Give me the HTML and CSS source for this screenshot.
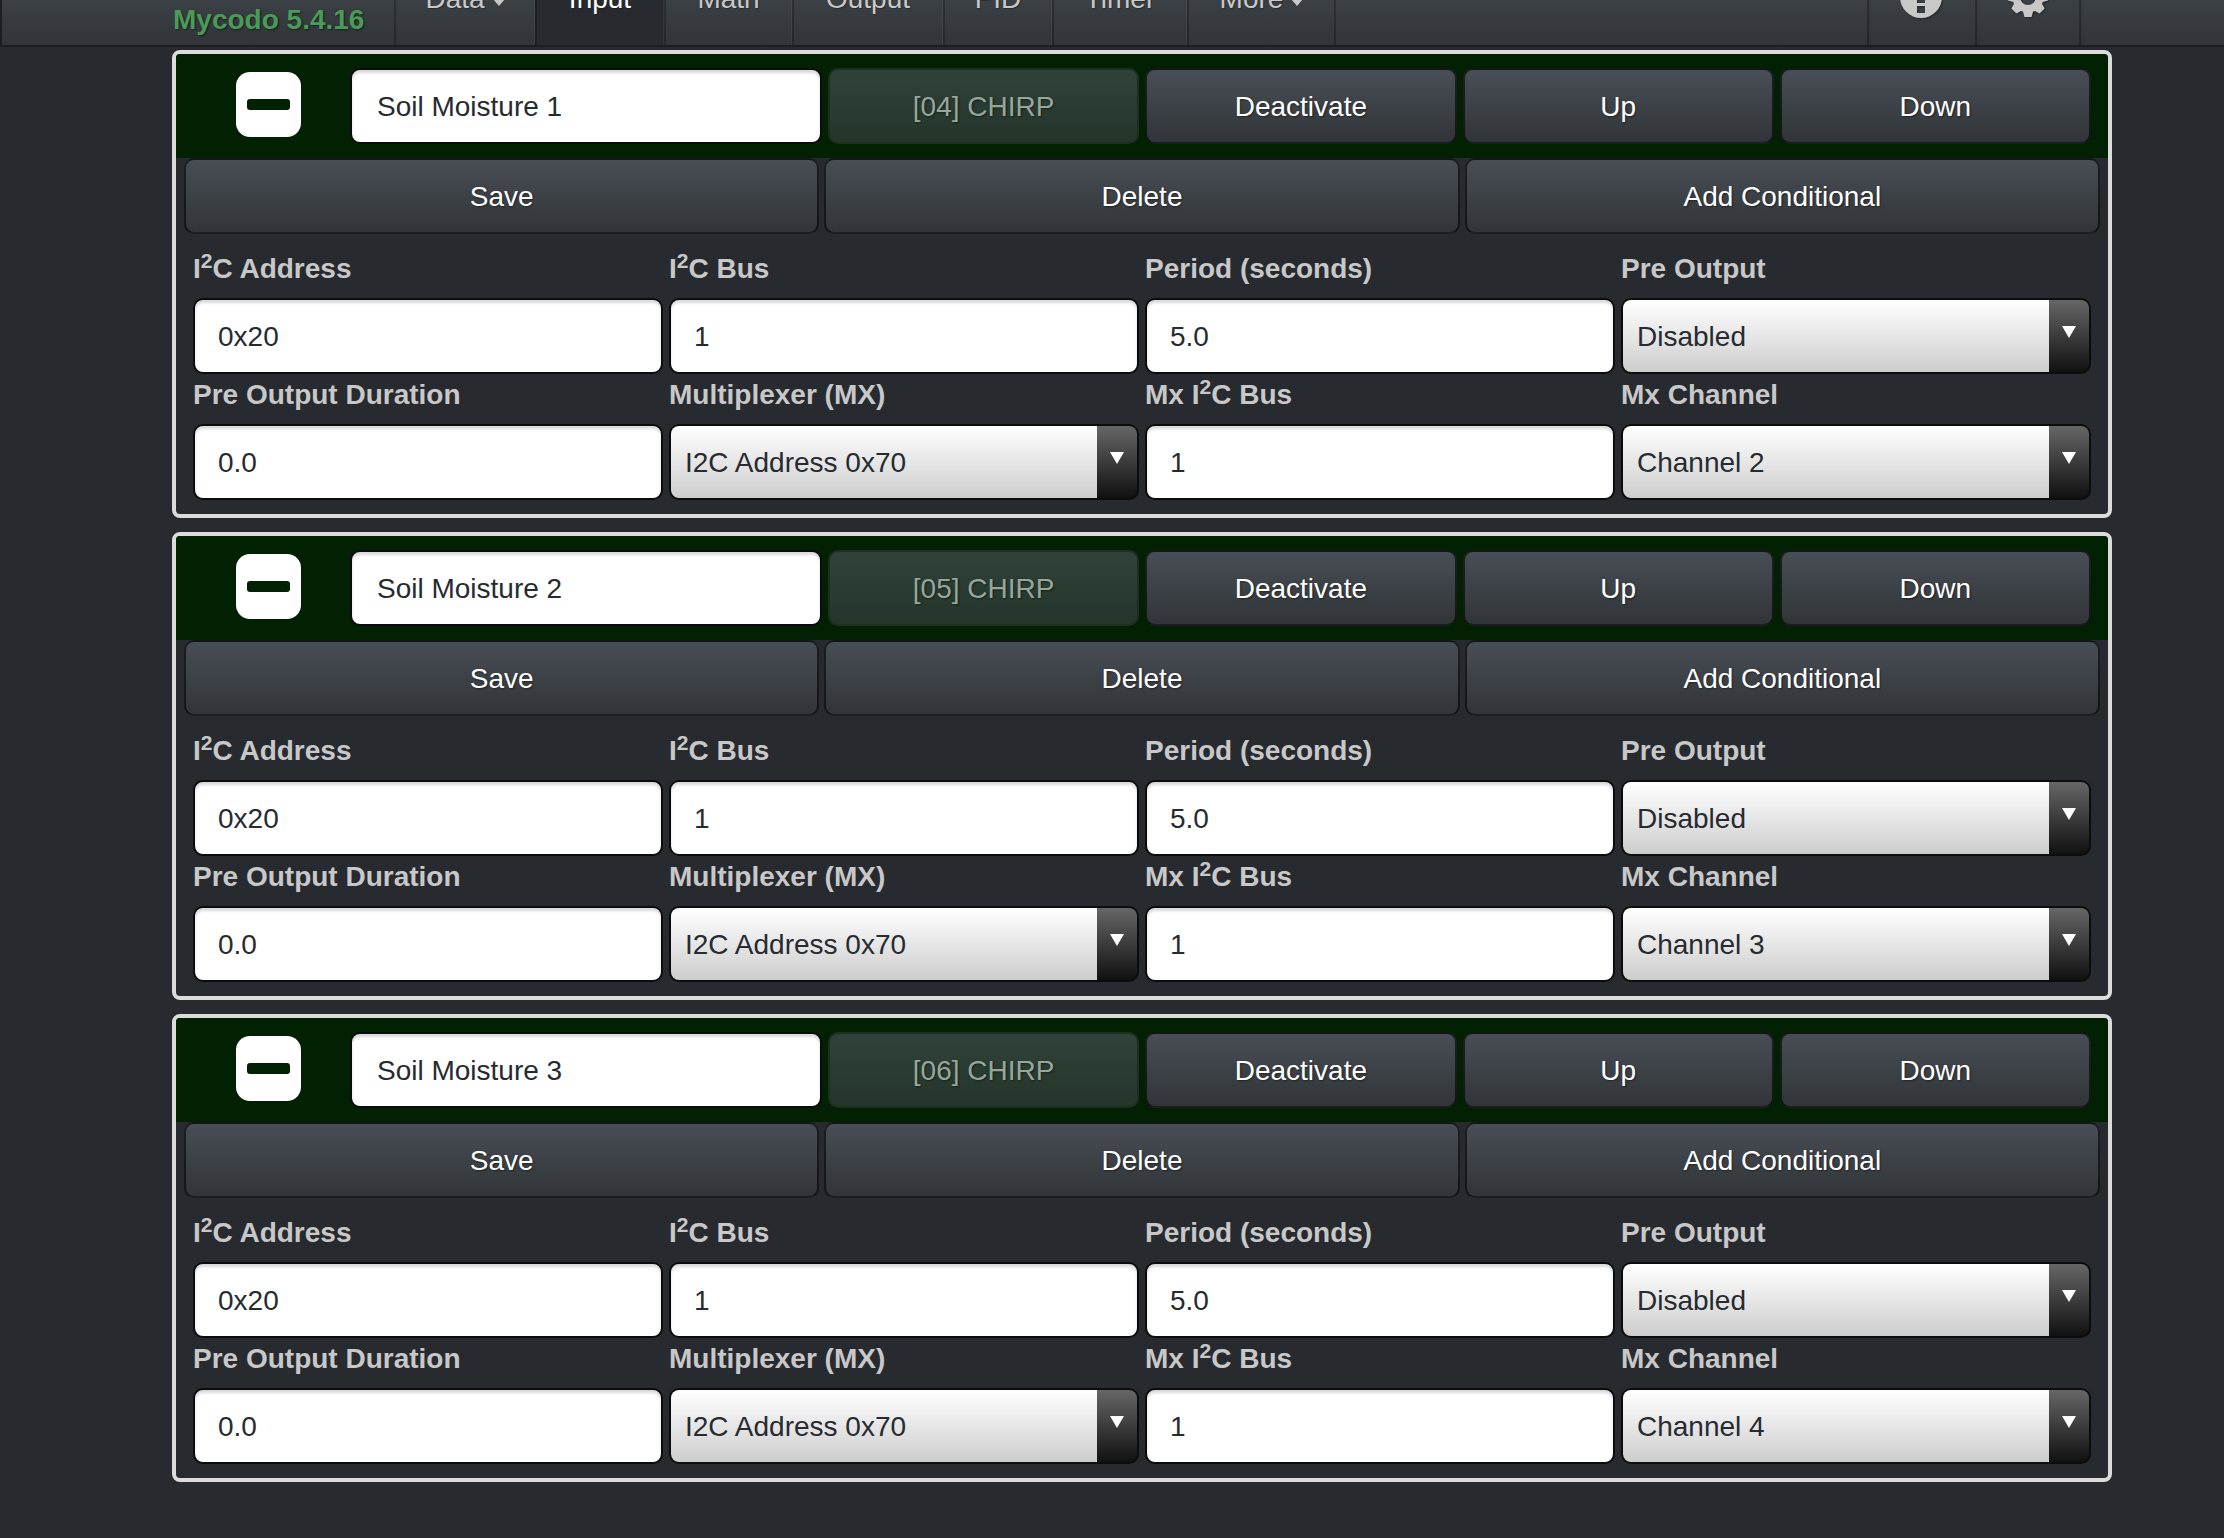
FILE: index.html
```html
<!DOCTYPE html>
<html lang="en">
<head>
<meta charset="utf-8">
<title>Mycodo Input</title>
<link rel="stylesheet" href="styles.css">
</head>
<body>
<nav class="navbar">
  <a class="brand">Mycodo 5.4.16</a>
  <ul class="nav-list">
    <li class="nav-item item-data">Data<span class="caret"></span></li>
    <li class="nav-item item-input active">Input</li>
    <li class="nav-item item-math">Math</li>
    <li class="nav-item item-output">Output</li>
    <li class="nav-item item-pid">PID</li>
    <li class="nav-item item-timer">Timer</li>
    <li class="nav-item item-more">More<span class="caret"></span></li>
  </ul>
  <ul class="nav-right">
    <li class="nav-icon icon-info">
      <svg width="44" height="44" viewBox="0 0 44 44"><path fill="#c8c8c8" fill-rule="evenodd" d="M22 1a21 21 0 1 0 0 42a21 21 0 1 0 0-42zM18 20h8v8h-8zM18 31h8v7h-8z"/></svg>
    </li>
    <li class="nav-icon icon-gear">
      <svg width="44" height="44" viewBox="0 0 44 44"><path fill="#c8c8c8" fill-rule="evenodd" d="M18.5 2H25.5L27 7.5L29.1 7.9L33.6 5.4L38.6 10.4L36.1 14.9L36.5 17L42 18.5V25.5L36.5 27L36.1 29.1L38.6 33.6L33.6 38.6L29.1 36.1L27 36.5L25.5 42H18.5L17 36.5L14.9 36.1L10.4 38.6L5.4 33.6L7.9 29.1L7.5 27L2 25.5V18.5L7.5 17L7.9 14.9L5.4 10.4L10.4 5.4L14.9 7.9L17 7.5ZM22 14a8 8 0 1 0 0 16a8 8 0 1 0 0-16z"/></svg>
    </li>
  </ul>
</nav>

<main class="list">

  <section class="panel">
    <div class="head">
      <button class="toggle"><span class="minus"></span></button>
      <input class="field name" value="Soil Moisture 1">
      <button class="btn disabled">[04] CHIRP</button>
      <button class="btn">Deactivate</button>
      <button class="btn">Up</button>
      <button class="btn">Down</button>
    </div>
    <div class="actions">
      <button class="btn">Save</button>
      <button class="btn">Delete</button>
      <button class="btn">Add Conditional</button>
    </div>
    <div class="grid">
      <div class="cell"><label>I<sup>2</sup>C Address</label><input class="field" value="0x20"></div>
      <div class="cell"><label>I<sup>2</sup>C Bus</label><input class="field" value="1"></div>
      <div class="cell"><label>Period (seconds)</label><input class="field" value="5.0"></div>
      <div class="cell"><label>Pre Output</label><div class="select"><span class="select-text">Disabled</span><span class="select-arrow"></span></div></div>
      <div class="cell"><label>Pre Output Duration</label><input class="field" value="0.0"></div>
      <div class="cell"><label>Multiplexer (MX)</label><div class="select"><span class="select-text">I2C Address 0x70</span><span class="select-arrow"></span></div></div>
      <div class="cell"><label>Mx I<sup>2</sup>C Bus</label><input class="field" value="1"></div>
      <div class="cell"><label>Mx Channel</label><div class="select"><span class="select-text">Channel 2</span><span class="select-arrow"></span></div></div>
    </div>
  </section>

  <section class="panel">
    <div class="head">
      <button class="toggle"><span class="minus"></span></button>
      <input class="field name" value="Soil Moisture 2">
      <button class="btn disabled">[05] CHIRP</button>
      <button class="btn">Deactivate</button>
      <button class="btn">Up</button>
      <button class="btn">Down</button>
    </div>
    <div class="actions">
      <button class="btn">Save</button>
      <button class="btn">Delete</button>
      <button class="btn">Add Conditional</button>
    </div>
    <div class="grid">
      <div class="cell"><label>I<sup>2</sup>C Address</label><input class="field" value="0x20"></div>
      <div class="cell"><label>I<sup>2</sup>C Bus</label><input class="field" value="1"></div>
      <div class="cell"><label>Period (seconds)</label><input class="field" value="5.0"></div>
      <div class="cell"><label>Pre Output</label><div class="select"><span class="select-text">Disabled</span><span class="select-arrow"></span></div></div>
      <div class="cell"><label>Pre Output Duration</label><input class="field" value="0.0"></div>
      <div class="cell"><label>Multiplexer (MX)</label><div class="select"><span class="select-text">I2C Address 0x70</span><span class="select-arrow"></span></div></div>
      <div class="cell"><label>Mx I<sup>2</sup>C Bus</label><input class="field" value="1"></div>
      <div class="cell"><label>Mx Channel</label><div class="select"><span class="select-text">Channel 3</span><span class="select-arrow"></span></div></div>
    </div>
  </section>

  <section class="panel">
    <div class="head">
      <button class="toggle"><span class="minus"></span></button>
      <input class="field name" value="Soil Moisture 3">
      <button class="btn disabled">[06] CHIRP</button>
      <button class="btn">Deactivate</button>
      <button class="btn">Up</button>
      <button class="btn">Down</button>
    </div>
    <div class="actions">
      <button class="btn">Save</button>
      <button class="btn">Delete</button>
      <button class="btn">Add Conditional</button>
    </div>
    <div class="grid">
      <div class="cell"><label>I<sup>2</sup>C Address</label><input class="field" value="0x20"></div>
      <div class="cell"><label>I<sup>2</sup>C Bus</label><input class="field" value="1"></div>
      <div class="cell"><label>Period (seconds)</label><input class="field" value="5.0"></div>
      <div class="cell"><label>Pre Output</label><div class="select"><span class="select-text">Disabled</span><span class="select-arrow"></span></div></div>
      <div class="cell"><label>Pre Output Duration</label><input class="field" value="0.0"></div>
      <div class="cell"><label>Multiplexer (MX)</label><div class="select"><span class="select-text">I2C Address 0x70</span><span class="select-arrow"></span></div></div>
      <div class="cell"><label>Mx I<sup>2</sup>C Bus</label><input class="field" value="1"></div>
      <div class="cell"><label>Mx Channel</label><div class="select"><span class="select-text">Channel 4</span><span class="select-arrow"></span></div></div>
    </div>
  </section>

</main>
</body>
</html>
```
FILE: styles.css
```css
* { box-sizing: border-box; }
html, body { height: 100%; }
body {
  margin: 0;
  height: 1538px;
  overflow: hidden;
  background: #272b30;
  font-family: "Liberation Sans", Arial, sans-serif;
  font-size: 28px;
  color: #c8c8c8;
}

.navbar {
  display: flex;
  height: 101px;
  margin-top: -54px;
  padding-left: 2px;
  background: linear-gradient(#484e55, #3a3f44 60%, #313539);
  border-bottom: 2px solid #1c1e22;
  border-left: 2px solid #1c1e22;
}
.brand {
  flex: none;
  width: 390px;
  padding: 54px 0 0 169px;
  font-weight: 700;
  line-height: 40px;
  color: #4a9a58;
  text-shadow: 1px 1px 2px rgba(0,0,0,.5);
  white-space: nowrap;
}
.nav-list, .nav-right {
  display: flex;
  margin: 0;
  padding: 0;
  list-style: none;
}
.nav-list { flex: 1; }
.nav-right { margin-right: 143px; }
.nav-item {
  display: flex;
  justify-content: center;
  align-items: center;
  padding-top: 7px;
  border-left: 2px solid rgba(0,0,0,.25);
  border-right: 1px solid rgba(255,255,255,.05);
  color: #c8c8c8;
  line-height: 40px;
  text-shadow: 1px 1px 1px rgba(0,0,0,.3);
}
.nav-list .nav-item:last-child { border-right: 2px solid rgba(0,0,0,.25); }
.item-data { width: 141px; }
.item-input { width: 129px; }
.item-math { width: 128px; }
.item-output { width: 151px; }
.item-pid { width: 109px; }
.item-timer { width: 135px; }
.item-more { width: 149px; }
.active {
  color: #fff;
  background: #272b30;
}
.caret {
  display: inline-block;
  margin: 6px 0 0 8px;
  border-top: 7px solid #c8c8c8;
  border-left: 6px solid transparent;
  border-right: 6px solid transparent;
}
.nav-icon {
  display: flex;
  align-items: flex-end;
  justify-content: center;
  padding-bottom: 26px;
  border-left: 2px solid rgba(0,0,0,.25);
  filter: drop-shadow(1px 1px 1px rgba(0,0,0,.35));
}
.icon-info { width: 108px; padding-right: 3px; }
.icon-gear { width: 106px; border-right: 2px solid rgba(0,0,0,.25); }

/* panels */
.list {
  display: flex;
  flex-direction: column;
  gap: 14px;
  width: 1940px;
  margin: 3px 0 0 172px;
}
.panel {
  height: 468px;
  border: 4px solid #dcdcdc;
  border-radius: 8px;
  background: #272b30;
}
.head {
  display: flex;
  gap: 6px;
  height: 104px;
  padding: 14px 17px 14px 60px;
  background: #022002;
  border-radius: 4px 4px 0 0;
}
.toggle {
  flex: none;
  width: 65px;
  height: 65px;
  margin: 4px 43px 0 0;
  padding: 0;
  display: flex;
  align-items: center;
  justify-content: center;
  background: #fff;
  border: 0;
  border-radius: 14px;
}
.minus {
  width: 43px;
  height: 11px;
  border-radius: 3px;
  background: #022002;
}
.field {
  display: block;
  width: 100%;
  height: 76px;
  padding: 2px 22px 0 23px;
  background: #fff;
  border: 2px solid #0b0c0d;
  border-radius: 10px;
  box-shadow: inset 0 3px 3px rgba(0,0,0,.15);
  font: 28px "Liberation Sans", Arial, sans-serif;
  color: #272b30;
  outline: 0;
}
.name { flex: none; width: 472px; padding-left: 25px; }
.btn {
  flex: 1 1 0;
  min-width: 0;
  height: 76px;
  padding: 2px 0 0;
  background: linear-gradient(#484e55, #3a3f44 60%, #313539);
  border: 2px solid rgba(0,0,0,.6);
  border-radius: 10px;
  font: 28px "Liberation Sans", Arial, sans-serif;
  color: #fff;
  text-shadow: 1px 1px 2px rgba(0,0,0,.45);
}
.disabled {
  background: linear-gradient(#30423a, #25352a);
  border-color: #1c2f20;
  color: #96a79b;
}
.actions {
  display: flex;
  gap: 5px;
  padding: 0 8px 0 8px;
}
.grid {
  display: grid;
  grid-template-columns: repeat(4, 470px);
  column-gap: 6px;
  padding: 14px 0 0 17px;
}
.cell label {
  display: block;
  height: 40px;
  margin-bottom: 10px;
  font-weight: 700;
  line-height: 41px;
  color: #c8c8c8;
  white-space: nowrap;
}
sup {
  font-size: 75%;
  line-height: 0;
  position: relative;
  top: -.5em;
  vertical-align: baseline;
}
.select {
  display: flex;
  height: 76px;
  background: #0b0c0d;
  border: 2px solid #0b0c0d;
  border-radius: 10px;
  overflow: hidden;
}
.select-text {
  flex: 1;
  padding-left: 14px;
  background: linear-gradient(#fff, #cdcdcd);
  line-height: 74px;
  color: #272b30;
}
.select-arrow {
  flex: none;
  width: 40px;
  display: flex;
  justify-content: center;
  padding-top: 26px;
  background: linear-gradient(#666, #111);
}
.select-arrow::before {
  content: "";
  width: 0;
  height: 0;
  border-top: 12px solid #fff;
  border-left: 7px solid transparent;
  border-right: 7px solid transparent;
}
```
